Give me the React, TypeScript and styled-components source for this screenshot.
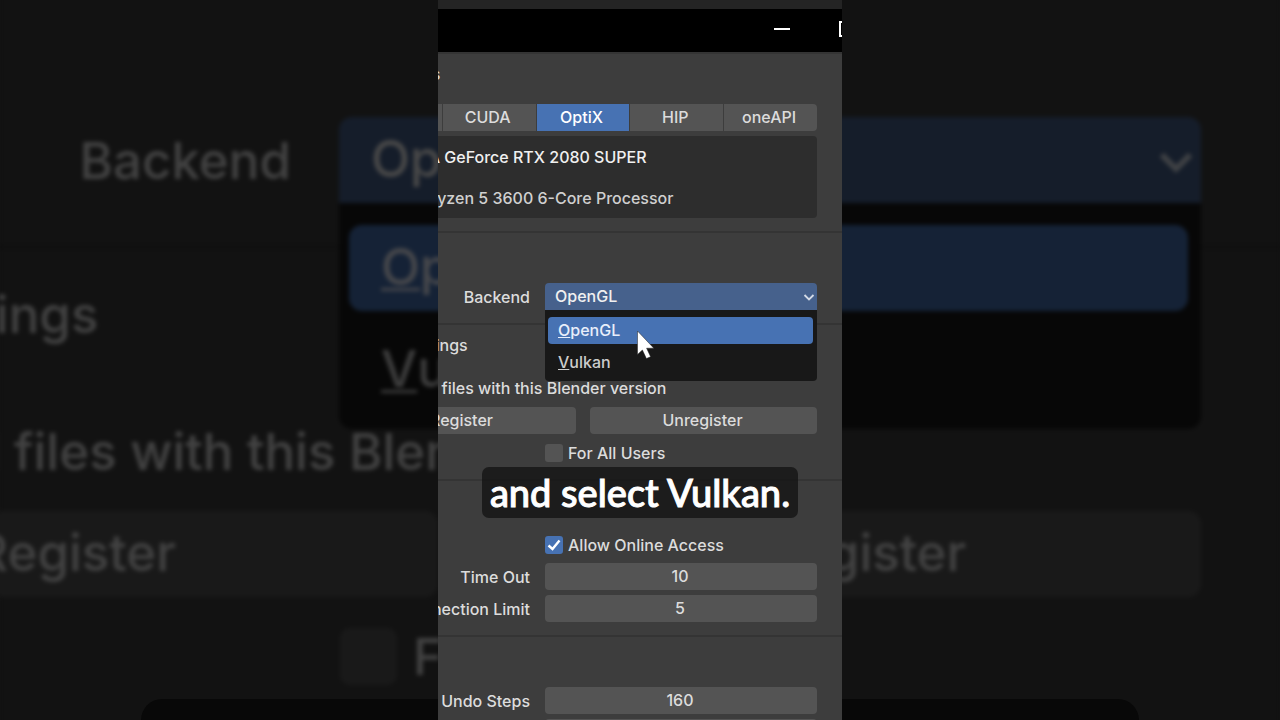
import React, { useId, useState } from "react";
import styled, { createGlobalStyle, css, ThemeProvider } from "styled-components";

type Scaled = { theme: { scale: number } };

/* Whole-pixel length in the current scale. */
const px = (n: number) => (p: Scaled) => `${Math.round(n * p.theme.scale)}px`;

const normal = { scale: 1 };
const enlarged = { scale: 3.168 };

const GlobalStyle = createGlobalStyle`
  *, *::before, *::after { box-sizing: border-box; }
  body { margin: 0; background: #121212; }
  button, input, select { font: inherit; color: inherit; border: 0; margin: 0; padding: 0; }
`;

const Stage = styled.div`
  position: relative;
  display: flex;
  justify-content: center;
  height: 100vh;
  min-height: 720px;
  overflow: hidden;
  background: #121212;
  font-family: Inter, "Liberation Sans", sans-serif;
`;

const Backdrop = styled.div`
  position: absolute;
  inset: 0;
  display: flex;
  flex-direction: column;
  overflow: hidden;
`;

const BackdropPicture = styled.div`
  display: flex;
  flex-direction: column;
  align-items: flex-end;
  margin-top: -48px;
  background: #3d3d3d;
  filter: brightness(0.3) blur(2px);
`;

const BackdropCaption = styled.div`
  position: absolute;
  left: 11%;
  right: 11%;
  bottom: 0;
  height: 21px;
  border-radius: 22px 22px 0 0;
  background: #080808;
`;

const Frame = styled.main`
  position: relative;
  flex: 0 1 404px;
  display: flex;
  flex-direction: column;
  align-items: flex-end;
  overflow: hidden;
  background: #3d3d3d;
`;

const TopStrip = styled.div`
  flex: none;
  width: 100%;
  height: 9px;
  background: #242424;
`;

const TitleBar = styled.header`
  flex: none;
  display: flex;
  justify-content: flex-end;
  width: 100%;
  height: 43px;
  background: #000;
`;

const WindowButtons = styled.div`
  display: flex;
  margin-right: -36px;
`;

const WindowButton = styled.button`
  display: grid;
  place-items: center;
  width: 64px;
  height: 40px;
  background: none;
  color: #fff;
`;

const Section = styled.section`
  flex: none;
  width: ${px(580)};
  padding: ${px(7)} 0 ${px(13)};
  border-top: ${px(2)} solid #343434;
  font-size: ${px(16)};
  font-weight: 500;
  color: #dcdcdc;
`;

const Heading = styled.h2`
  margin: 0 0 ${px(16)};
  padding-left: ${px(2)};
  height: ${px(27)};
  line-height: ${px(27)};
  font-size: inherit;
  font-weight: inherit;
  white-space: nowrap;
`;

const Body = styled.div`
  display: flex;
  flex-direction: column;
  gap: ${px(5)};
  padding: 0 ${px(25)} 0 ${px(87)};
`;

const Tabs = styled.div`
  display: grid;
  grid-template-columns: repeat(5, 1fr);
  gap: 1px;
  border-radius: 4px;
  overflow: hidden;
`;

const Tab = styled.button<{ $active?: boolean }>`
  height: ${px(27)};
  padding: 0 3px 1px 0;
  background: ${(p) => (p.$active ? "#4772b3" : "#545454")};
  color: ${(p) => (p.$active ? "#fff" : "#dcdcdc")};
`;

const Devices = styled.div`
  display: flex;
  flex-direction: column;
  border-radius: 4px;
  background: #2d2d2d;
`;

const Device = styled.label<{ $on?: boolean }>`
  display: flex;
  align-items: center;
  gap: 6px;
  height: 41px;
  padding-left: 12px;
  white-space: nowrap;
  color: ${(p) => (p.$on ? "#f0f0f0" : "#d0d0d0")};
`;

const Field = styled.div`
  display: grid;
  grid-template-columns: 1fr ${px(272)};
  column-gap: ${px(15)};
  align-items: center;
`;

const FieldLabel = styled.label`
  text-align: right;
  white-space: nowrap;
`;

const control = css`
  width: 100%;
  height: ${px(27)};
  padding: 0 ${px(2)} ${px(1)} 0;
  border-radius: ${px(4)};
  background: #545454;
`;

const NumberBox = styled.input`
  ${control}
  text-align: center;
  outline: none;
`;

const PushButton = styled.button`
  ${control}
`;

const ButtonPair = styled.div`
  display: grid;
  grid-template-columns: 1fr 1fr;
  gap: ${px(14)};
`;

const TextLine = styled.p`
  margin: 0;
  height: ${px(27)};
  line-height: ${px(27)};
  white-space: nowrap;
`;

const SelectWrap = styled.div`
  position: relative;
`;

const Select = styled.select`
  ${control}
  display: block;
  appearance: none;
  padding-left: ${px(10)};
  border-radius: ${px(4)} ${px(4)} 0 0;
  background: #46618c;
  color: #f0f0f0;
  outline: none;
`;

const Chevron = styled.svg`
  position: absolute;
  right: ${px(2)};
  top: ${px(8)};
  width: ${px(12)};
  height: ${px(12)};
  pointer-events: none;
`;

const Menu = styled.div`
  position: absolute;
  z-index: 1;
  top: 100%;
  left: 0;
  right: 0;
  display: flex;
  flex-direction: column;
  gap: ${px(5)};
  padding: ${px(7)} ${px(4)} ${px(5)} ${px(3)};
  border-radius: 0 0 ${px(4)} ${px(4)};
  background: #181818;
`;

const MenuItem = styled.button<{ $active: boolean }>`
  height: ${px(27)};
  padding: 0 0 ${px(1)} ${px(10)};
  border-radius: ${px(4)};
  text-align: left;
  background: ${(p) => (p.$active ? "#4772b3" : "none")};
  color: ${(p) => (p.$active ? "#e8eefa" : "#cccccc")};
`;

const Mnemonic = styled.span`
  text-decoration: underline;
  text-decoration-thickness: ${px(1)};
  text-underline-offset: ${px(1)};
  text-decoration-skip-ink: none;
`;

const Pointer = styled.svg`
  position: absolute;
  z-index: 2;
  left: 91px;
  top: 45px;
  width: 20px;
  height: 32px;
`;

const CheckRow = styled.div`
  display: flex;
  align-items: center;
  height: ${px(27)};
  padding-left: ${px(196)};
`;

const CheckLabel = styled.label`
  display: flex;
  align-items: center;
  gap: ${px(5)};
  white-space: nowrap;
`;

const CheckBox = styled.span`
  display: grid;
  flex: none;
  width: ${px(18)};
  height: ${px(18)};
  & > * {
    grid-area: 1 / 1;
  }
`;

const CheckInput = styled.input`
  appearance: none;
  width: 100%;
  height: 100%;
  border-radius: ${px(3)};
  background: #545454;
  &:checked {
    background: #4772b3;
  }
`;

const CheckMark = styled.svg`
  width: 100%;
  height: 100%;
  pointer-events: none;
`;

const CaptionLayer = styled.div`
  position: absolute;
  z-index: 3;
  left: 0;
  right: 0;
  top: 467px;
  display: flex;
  justify-content: center;
  pointer-events: none;
`;

const Caption = styled.p`
  margin: 0;
  padding: 0 8px;
  border-radius: 7px;
  background: rgba(22, 22, 22, 0.85);
  color: #fff;
  font-family: Lato, "Liberation Sans", sans-serif;
  font-size: 38px;
  font-weight: 500;
  -webkit-text-stroke: 1px #fff;
  line-height: 51px;
  white-space: nowrap;
`;

function Check({ checked, onToggle }: { checked: boolean; onToggle: () => void }) {
  return (
    <CheckBox>
      <CheckInput type="checkbox" checked={checked} onChange={onToggle} />
      {checked && (
        <CheckMark viewBox="0 0 18 18" fill="none" stroke="#fff" strokeWidth="2.4">
          <path d="M3.5 9.5 7.5 13 14.5 4.5" />
        </CheckMark>
      )}
    </CheckBox>
  );
}

function Option({ text, initial = false }: { text: string; initial?: boolean }) {
  const [on, setOn] = useState(initial);
  return (
    <CheckRow>
      <CheckLabel>
        <Check checked={on} onToggle={() => setOn(!on)} />
        {text}
      </CheckLabel>
    </CheckRow>
  );
}

function DeviceRow({ name, initial = false }: { name: string; initial?: boolean }) {
  const [on, setOn] = useState(initial);
  return (
    <Device $on={on}>
      <Check checked={on} onToggle={() => setOn(!on)} />
      {name}
    </Device>
  );
}

function NumberField({ label, value }: { label: string; value: number }) {
  const id = useId();
  return (
    <Field>
      <FieldLabel htmlFor={id}>{label}</FieldLabel>
      <NumberBox id={id} type="text" inputMode="numeric" defaultValue={value} />
    </Field>
  );
}

const backends = ["OpenGL", "Vulkan"];

function GraphicsSection({ pointer = false }: { pointer?: boolean }) {
  const id = useId();
  const [backend, setBackend] = useState("OpenGL");
  return (
    <Section>
      <Heading>Display Graphics</Heading>
      <Body>
        <Field>
          <FieldLabel htmlFor={id}>Backend</FieldLabel>
          <SelectWrap>
            <Select id={id} value={backend} onChange={(e) => setBackend(e.target.value)}>
              {backends.map((name) => (
                <option key={name}>{name}</option>
              ))}
            </Select>
            <Chevron viewBox="0 0 12 12" fill="none" stroke="#d4dbe6" strokeWidth="1.8">
              <path d="M1.5 4 6 8.5 10.5 4" />
            </Chevron>
            <Menu role="listbox" aria-label="Backend">
              {backends.map((name) => (
                <MenuItem
                  key={name}
                  type="button"
                  role="option"
                  aria-selected={name === backend}
                  $active={name === backend}
                  onClick={() => setBackend(name)}
                >
                  <Mnemonic>{name[0]}</Mnemonic>
                  {name.slice(1)}
                </MenuItem>
              ))}
            </Menu>
            {pointer && (
              <Pointer viewBox="0 0 20 32" aria-hidden="true">
                <path
                  d="M1.5 3V26.5L6.4 22l4 8.6 4.2-1.9-4-8.5h7.2z"
                  fill="#fff"
                  stroke="#222"
                  strokeWidth="0.5"
                />
              </Pointer>
            )}
          </SelectWrap>
        </Field>
      </Body>
    </Section>
  );
}

function SystemSection() {
  return (
    <Section>
      <Heading>Operating System Settings</Heading>
      <Body>
        <TextLine>Open blend files with this Blender version</TextLine>
        <ButtonPair>
          <PushButton type="button">Register</PushButton>
          <PushButton type="button">Unregister</PushButton>
        </ButtonPair>
        <Option text="For All Users" />
      </Body>
    </Section>
  );
}

export default function App() {
  const [device, setDevice] = useState("OptiX");
  return (
    <Stage>
      <GlobalStyle />
      <ThemeProvider theme={enlarged}>
        <Backdrop aria-hidden="true" inert>
          <BackdropPicture>
            <GraphicsSection />
            <SystemSection />
          </BackdropPicture>
          <BackdropCaption />
        </Backdrop>
      </ThemeProvider>
      <ThemeProvider theme={normal}>
        <Frame>
          <TopStrip />
          <TitleBar>
            <WindowButtons>
              <WindowButton type="button" aria-label="Minimize">
                <svg width="16" height="16" viewBox="0 0 16 16" fill="none" stroke="currentColor" strokeWidth="2">
                  <path d="M0 8h16" />
                </svg>
              </WindowButton>
              <WindowButton type="button" aria-label="Maximize">
                <svg width="16" height="16" viewBox="0 0 16 16" fill="none" stroke="currentColor" strokeWidth="2">
                  <rect x="2" y="1" width="14" height="14" />
                </svg>
              </WindowButton>
            </WindowButtons>
          </TitleBar>
          <Section>
            <Heading>Cycles Render Devices</Heading>
            <Body>
              <Tabs>
                {["None", "CUDA", "OptiX", "HIP", "oneAPI"].map((name) => (
                  <Tab key={name} type="button" $active={name === device} onClick={() => setDevice(name)}>
                    {name}
                  </Tab>
                ))}
              </Tabs>
              <Devices>
                <DeviceRow name="NVIDIA GeForce RTX 2080 SUPER" initial />
                <DeviceRow name="AMD Ryzen 5 3600 6-Core Processor" />
              </Devices>
            </Body>
          </Section>
          <GraphicsSection pointer />
          <SystemSection />
          <Section>
            <Heading>Network</Heading>
            <Body>
              <Option text="Allow Online Access" initial />
              <NumberField label="Time Out" value={10} />
              <NumberField label="Connection Limit" value={5} />
            </Body>
          </Section>
          <Section>
            <Heading>Memory &amp; Limits</Heading>
            <Body>
              <NumberField label="Undo Steps" value={160} />
              <NumberField label="Undo Memory Limit" value={0} />
            </Body>
          </Section>
          <CaptionLayer>
            <Caption>and select Vulkan.</Caption>
          </CaptionLayer>
        </Frame>
      </ThemeProvider>
    </Stage>
  );
}
